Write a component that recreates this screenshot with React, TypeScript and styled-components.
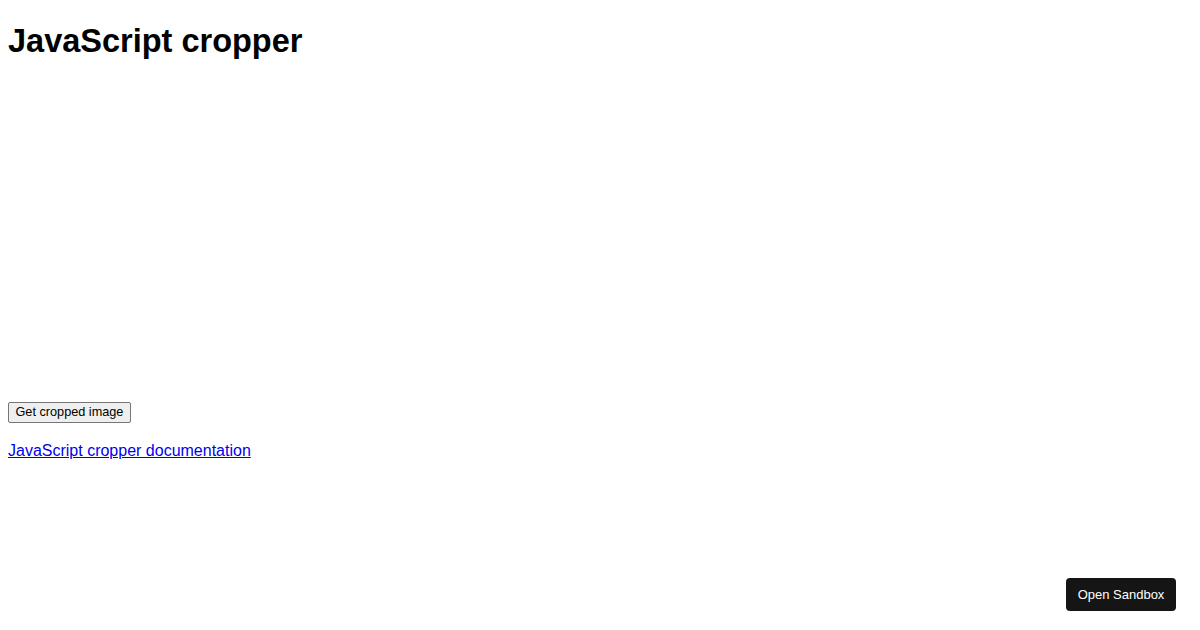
import React from 'react';
import styled, { createGlobalStyle } from 'styled-components';

const GlobalStyle = createGlobalStyle`
  body {
    margin: 8px;
    background: #fff;
    font-family: "Liberation Sans", Arial, sans-serif;
    color: #000;
  }
`;

const Title = styled.h1`
  font-size: 32.5px;
  font-weight: bold;
  margin: 15.44px 0 21.44px;
`;

const CropperArea = styled.div`
  height: 320px;
`;

const ActionButton = styled.button`
  font-family: "Liberation Sans", Arial, sans-serif;
  font-size: 12.7px;
  line-height: 15px;
  padding: 2px 6.5px;
  background: #efefef;
  border: 1px solid #767676;
  border-radius: 2px;
  color: #000;
`;

const DocLink = styled.a`
  font-size: 16px;
  color: #0000ee;
`;

const Paragraph = styled.p`
  margin: 19px 0 16px;
`;

const SandboxButton = styled.a`
  position: fixed;
  right: 24px;
  bottom: 19px;
  width: 110px;
  height: 33px;
  display: flex;
  align-items: center;
  justify-content: center;
  background: #151515;
  color: #fff;
  border-radius: 4px;
  font-size: 13px;
  text-decoration: none;
  font-family: "Liberation Sans", Arial, sans-serif;
`;

export default function App() {
  return (
    <>
      <GlobalStyle />
      <Title>JavaScript cropper</Title>
      <CropperArea />
      <ActionButton>Get cropped image</ActionButton>
      <Paragraph>
        <DocLink href="#">JavaScript cropper documentation</DocLink>
      </Paragraph>
      <SandboxButton href="#">Open Sandbox</SandboxButton>
    </>
  );
}
